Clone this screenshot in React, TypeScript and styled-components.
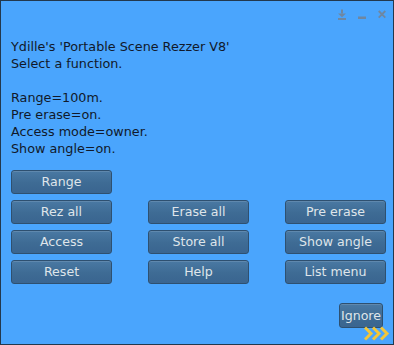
import React from "react";
import styled, { createGlobalStyle } from "styled-components";

const GlobalStyle = createGlobalStyle`
  html, body {
    margin: 0;
    padding: 0;
    background: #4aa5fd;
  }
  * {
    box-sizing: border-box;
  }
`;

const Floater = styled.div`
  position: relative;
  width: 394px;
  height: 345px;
  background: #4aa5fd;
  border: 1px solid #22384d;
  font-family: "DejaVu Sans", "Liberation Sans", sans-serif;
  display: flex;
  flex-direction: column;
  padding: 0 10px;
`;

const TitleBar = styled.div`
  height: 37px;
  display: flex;
  justify-content: flex-end;
  align-items: flex-start;
  gap: 12px;
  padding-top: 8px;
  margin-right: -3px;
`;

const TitleIcon = styled.button`
  width: 8px;
  height: 11px;
  padding: 0;
  border: 0;
  background: none;
  display: flex;
  align-items: flex-start;
  justify-content: center;
  svg {
    display: block;
  }
`;

const Message = styled.div`
  color: #11192a;
  font-size: 12.75px;
  line-height: 17px;
  white-space: pre;
  min-height: 119px;
`;

const ButtonGrid = styled.div`
  margin-top: 13px;
  display: grid;
  grid-template-columns: repeat(3, 101px);
  grid-auto-rows: 24px;
  column-gap: 36px;
  row-gap: 6px;
`;

const DialogButton = styled.button<{ $wide?: boolean }>`
  width: ${(p) => (p.$wide ? "101px" : "44px")};
  height: ${(p) => (p.$wide ? "24px" : "25px")};
  padding: 0;
  border: 1px solid #2e5070;
  border-radius: 3px;
  background: linear-gradient(#4a79a3, #3e6b94 55%, #3a6590);
  box-shadow: inset 0 1px 0 rgba(255, 255, 255, 0.12);
  color: #dfe5ea;
  font-family: "DejaVu Sans", "Liberation Sans", sans-serif;
  font-size: 12.6px;
  line-height: 20px;
  text-align: center;
  white-space: nowrap;
  cursor: pointer;
`;

const Footer = styled.div`
  margin-top: 19px;
  display: flex;
  justify-content: flex-end;
`;

const Chevrons = styled.div`
  position: absolute;
  right: 3px;
  bottom: 3px;
  display: flex;
`;

const lines = [
  "Ydille's 'Portable Scene Rezzer V8'",
  "Select a function.",
  "",
  "Range=100m.",
  "Pre erase=on.",
  "Access mode=owner.",
  "Show angle=on.",
];

const buttons: (string | null)[] = [
  "Range", null, null,
  "Rez all", "Erase all", "Pre erase",
  "Access", "Store all", "Show angle",
  "Reset", "Help", "List menu",
];

const iconColor = "#6f87a1";

export default function App() {
  return (
    <>
      <GlobalStyle />
      <Floater>
        <TitleBar>
          <TitleIcon aria-label="Dock">
            <svg width="8" height="11" viewBox="0 0 8 11">
              <rect x="3" y="0.5" width="2" height="4" fill={iconColor} />
              <path d="M0 4.5 H8 L4 8.2 Z" fill={iconColor} />
              <rect x="0" y="9" width="8" height="2" fill={iconColor} />
            </svg>
          </TitleIcon>
          <TitleIcon aria-label="Minimize">
            <svg width="8" height="11" viewBox="0 0 8 11">
              <rect x="0" y="7.5" width="8" height="2.5" fill={iconColor} />
            </svg>
          </TitleIcon>
          <TitleIcon aria-label="Close">
            <svg width="8" height="11" viewBox="0 0 8 11">
              <path d="M0.7 2 L7.3 8.6 M7.3 2 L0.7 8.6" stroke={iconColor} strokeWidth="1.8" />
            </svg>
          </TitleIcon>
        </TitleBar>
        <Message>{lines.join("\n")}</Message>
        <ButtonGrid>
          {buttons.map((label, i) =>
            label ? (
              <DialogButton key={i} $wide>
                {label}
              </DialogButton>
            ) : (
              <span key={i} />
            )
          )}
        </ButtonGrid>
        <Footer>
          <DialogButton>Ignore</DialogButton>
        </Footer>
        <Chevrons>
          <svg width="26" height="15" viewBox="0 0 26 15">
            {[0, 8, 16].map((x) => (
              <path
                key={x}
                d={`M${x + 1} 1.5 L${x + 7} 7.5 L${x + 1} 13.5`}
                fill="none"
                stroke="#f2c63a"
                strokeWidth="3"
              />
            ))}
          </svg>
        </Chevrons>
      </Floater>
    </>
  );
}
